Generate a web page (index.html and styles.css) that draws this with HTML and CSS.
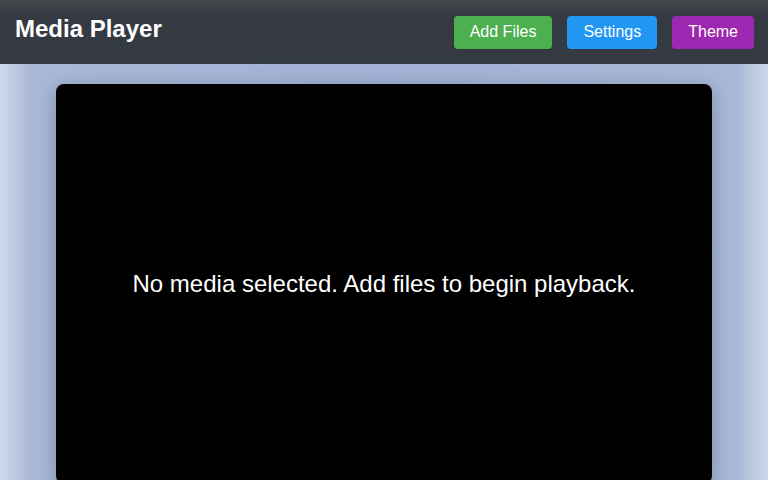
FILE: index.html
```html
<!DOCTYPE html>
<html lang="en">
<head>
  <meta charset="UTF-8">
  <meta name="viewport" content="width=device-width, initial-scale=1.0">
  <title>Media Player</title>
  <link rel="stylesheet" href="styles.css">
</head>
<body>

  <header class="app-header">
    <h1 class="app-title">Media Player</h1>
    <div class="header-actions">
      <button class="btn btn-add">Add Files</button>
      <button class="btn btn-settings">Settings</button>
      <button class="btn btn-theme">Theme</button>
    </div>
  </header>

  <main class="player-wrap">
    <div class="player">
      <p class="player-empty">No media selected. Add files to begin playback.</p>
    </div>
  </main>

</body>
</html>
```

FILE: styles.css
```css
body {
  font-family: "Liberation Sans", Arial, sans-serif;
  margin: 0;
  padding: 0;
  min-height: 100vh;
  background: linear-gradient(to right, #d0d9e9 0%, #a9b8d9 4%, #a3b3d6 50%, #a9b8d9 96%, #d0d9e9 100%);
}

.app-header {
  display: flex;
  justify-content: space-between;
  align-items: flex-start;
  height: 64px;
  box-sizing: border-box;
  padding: 15px 14px 0 15px;
  background: linear-gradient(to bottom, #45484d 0%, #353a42 25%, #343a42 100%);
}

.app-title {
  margin: 0;
  font-size: 24px;
  font-weight: bold;
  color: #fff;
}

.header-actions {
  display: flex;
  gap: 15px;
  margin-top: 1px;
}

.btn {
  font-family: inherit;
  font-size: 16px;
  padding: 7px 16px 8px;
  border: none;
  border-radius: 4px;
  color: #fff;
  cursor: pointer;
}

.btn-add {
  background-color: #4caf50;
}

.btn-settings {
  background-color: #2196f3;
}

.btn-theme {
  background-color: #9c27b0;
}

.player-wrap {
  padding: 20px 0;
}

.player {
  width: 656px;
  height: 400px;
  margin: 0 auto;
  background-color: #000;
  border-radius: 8px;
  box-shadow: 0 4px 20px rgba(0, 0, 0, 0.25);
  display: flex;
  align-items: center;
  justify-content: center;
}

.player-empty {
  margin: 0;
  color: #fff;
  font-size: 24px;
}
```
